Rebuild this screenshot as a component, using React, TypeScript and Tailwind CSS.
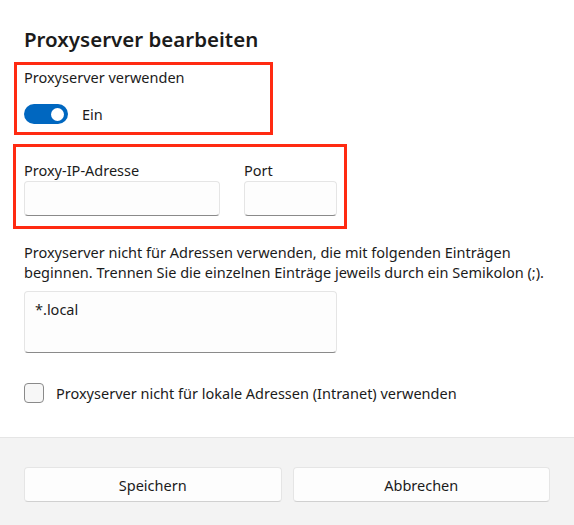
import { useState } from "react";

export default function App() {
  const [enabled, setEnabled] = useState(true);
  const [bypassLocal, setBypassLocal] = useState(false);

  return (
    <div
      className="flex h-[525px] w-[574px] flex-col bg-white text-[14.5px] leading-[20px] text-[#1b1b1b]"
      style={{ fontFamily: '"Noto Sans", "Open Sans", sans-serif' }}
    >
      <div className="flex flex-1 flex-col px-6 pt-[25px]">
        <h1 className="text-[20.5px] font-semibold leading-[28px]">Proxyserver bearbeiten</h1>

        {/* Toggle block */}
        <div className="-ml-[10px] mt-[9px] w-[259px] border-[3px] border-[#ff2a12] pb-[8px] pl-[7px] pt-[2px]">
          <div>Proxyserver verwenden</div>
          <div className="mt-[17px] flex items-center gap-[14px]">
            <button
              onClick={() => setEnabled(!enabled)}
              className={
                enabled
                  ? "flex h-[20px] w-[44px] items-center justify-end rounded-full bg-[#0067c0] pr-[4px]"
                  : "flex h-[20px] w-[44px] items-center justify-start rounded-full border border-[#868686] bg-white pl-[4px]"
              }
            >
              <span
                className={
                  enabled
                    ? "h-[13px] w-[13px] rounded-full bg-white"
                    : "h-[12px] w-[12px] rounded-full bg-[#5d5d5d]"
                }
              />
            </button>
            <span>{enabled ? "Ein" : "Aus"}</span>
          </div>
        </div>

        {/* Address + port */}
        <div className="-ml-[11px] mt-[9px] flex w-[334px] gap-[24px] border-[3px] border-[#ff2a12] pb-[10px] pl-[8px] pt-[13px]">
          <div className="flex flex-col">
            <label htmlFor="ip">Proxy-IP-Adresse</label>
            <input
              id="ip"
              className="mt-[1px] h-[35px] w-[196px] rounded-[4px] border border-[#e5e5e5] border-b-[#8a8a8a] bg-[#fdfdfd] px-[11px] outline-none"
            />
          </div>
          <div className="flex flex-col">
            <label htmlFor="port">Port</label>
            <input
              id="port"
              className="mt-[1px] h-[35px] w-[93px] rounded-[4px] border border-[#e5e5e5] border-b-[#8a8a8a] bg-[#fdfdfd] px-[11px] outline-none"
            />
          </div>
        </div>

        <p className="mt-[13px] whitespace-nowrap">
          Proxyserver nicht für Adressen verwenden, die mit folgenden Einträgen
          <br />
          beginnen. Trennen Sie die einzelnen Einträge jeweils durch ein Semikolon (;).
        </p>

        <textarea
          defaultValue="*.local"
          className="mt-[9px] h-[62px] w-[313px] resize-none rounded-[4px] border border-[#e5e5e5] border-b-[#8a8a8a] bg-[#fdfdfd] px-[10px] pt-[7px] outline-none"
        />

        <label className="mt-[30px] flex items-center gap-[12px]">
          <input
            type="checkbox"
            checked={bypassLocal}
            onChange={(e) => setBypassLocal(e.target.checked)}
            className="h-[20px] w-[20px] appearance-none rounded-[4px] border border-[#8a8a8a] bg-[#f7f7f7] checked:border-[#0067c0] checked:bg-[#0067c0]"
          />
          <span>Proxyserver nicht für lokale Adressen (Intranet) verwenden</span>
        </label>
      </div>

      <div className="flex h-[88px] gap-[11px] border-t border-[#e5e5e5] bg-[#f3f3f3] px-6 pt-[29px]">
        <button className="h-[35px] flex-1 rounded-[4px] border border-[#e5e5e5] border-b-[#d0d0d0] bg-[#fdfdfd]">
          Speichern
        </button>
        <button className="h-[35px] flex-1 rounded-[4px] border border-[#e5e5e5] border-b-[#d0d0d0] bg-[#fdfdfd]">
          Abbrechen
        </button>
      </div>
    </div>
  );
}
